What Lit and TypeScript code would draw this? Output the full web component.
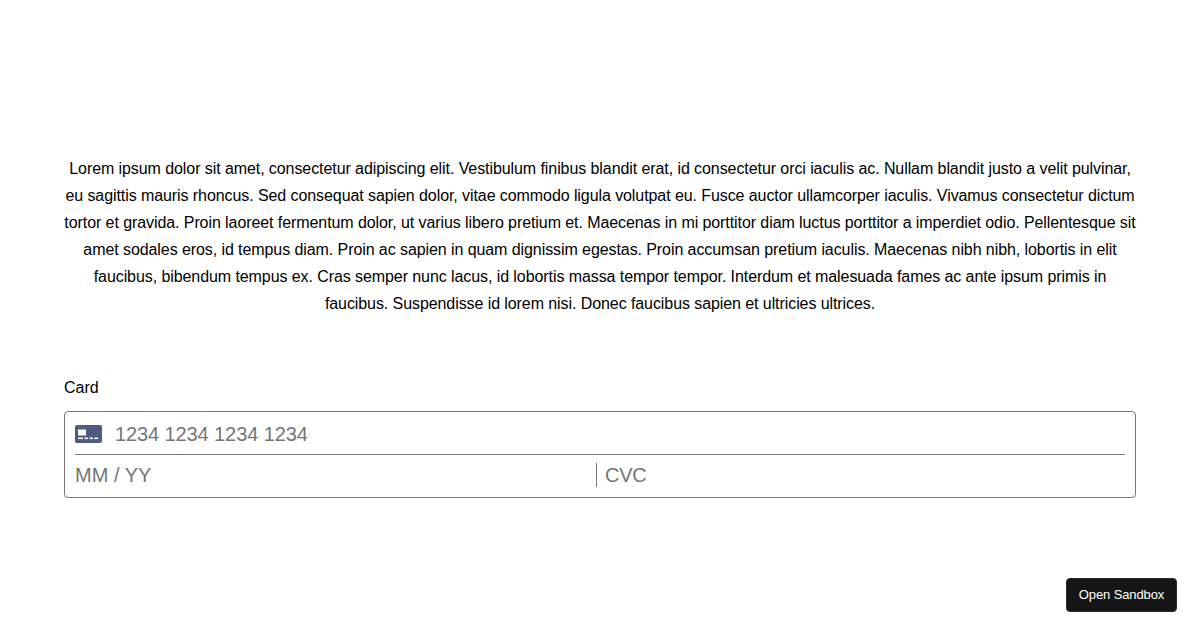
import { LitElement, html, css } from "lit";
import { customElement } from "lit/decorators.js";

const TEXT = "Lorem ipsum dolor sit amet, consectetur adipiscing elit. Vestibulum finibus blandit erat, id consectetur orci iaculis ac. Nullam blandit justo a velit pulvinar, eu sagittis mauris rhoncus. Sed consequat sapien dolor, vitae commodo ligula volutpat eu. Fusce auctor ullamcorper iaculis. Vivamus consectetur dictum tortor et gravida. Proin laoreet fermentum dolor, ut varius libero pretium et. Maecenas in mi porttitor diam luctus porttitor a imperdiet odio. Pellentesque sit amet sodales eros, id tempus diam. Proin ac sapien in quam dignissim egestas. Proin accumsan pretium iaculis. Maecenas nibh nibh, lobortis in elit faucibus, bibendum tempus ex. Cras semper nunc lacus, id lobortis massa tempor tempor. Interdum et malesuada fames ac ante ipsum primis in faucibus. Suspendisse id lorem nisi. Donec faucibus sapien et ultricies ultrices.";

@customElement("app-root")
export class AppRoot extends LitElement {
  static styles = css`
    :host {
      display: block;
      height: 630px;
      overflow: hidden;
      background: #fff;
      color: #000;
      font-family: "Liberation Sans", Arial, sans-serif;
      font-size: 16px;
    }
    .page {
      padding: 155px 64px 0;
      display: flex;
      flex-direction: column;
    }
    p {
      margin: 0 0 61px;
      line-height: 27px;
      text-align: center;
      letter-spacing: -0.08px;
    }
    label {
      display: block;
      line-height: 20px;
      margin-bottom: 13px;
    }
    .card {
      box-sizing: border-box;
      height: 87px;
      border: 1px solid #767676;
      border-radius: 4px;
      padding: 0 10px;
      display: flex;
      flex-direction: column;
      font-size: 20px;
      color: #757575;
    }
    .row1 {
      height: 43px;
      box-sizing: border-box;
      padding-top: 2px;
      display: flex;
      align-items: center;
      gap: 13px;
      border-bottom: 1px solid #767676;
      flex: none;
      letter-spacing: -0.1px;
    }
    .row2 {
      flex: 1;
      padding-bottom: 2px;
      display: grid;
      grid-template-columns: 521px 1fr;
      align-items: center;
    }
    .cvc {
      border-left: 1px solid #767676;
      padding-left: 8px;
      line-height: 24px;
      letter-spacing: -0.3px;
    }
    svg { display: block; flex: none; }
    .sandbox {
      position: absolute;
      left: 1066px;
      top: 578px;
      width: 111px;
      height: 34px;
      box-sizing: border-box;
      padding-bottom: 1px;
      display: flex;
      align-items: center;
      justify-content: center;
      background: #151515;
      border: 1px solid #2a2a2a;
      border-radius: 4px;
      color: #fff;
      font-size: 13px;
      letter-spacing: -0.12px;
      font-weight: 400;
    }
  `;

  render() {
    return html`
      <div class="page">
        <p>${TEXT}</p>
        <label>Card</label>
        <div class="card">
          <div class="row1">
            <svg width="27" height="18" viewBox="0 0 27 18">
              <rect width="27" height="18" rx="2" fill="#4f5b80"></rect>
              <rect x="3" y="4.5" width="8" height="6" fill="#fff"></rect>
              <rect x="3" y="12.5" width="5" height="1.6" fill="#fff"></rect>
              <rect x="9.5" y="12.5" width="3.5" height="1.6" fill="#fff"></rect>
              <rect x="14.5" y="12.5" width="3.5" height="1.6" fill="#fff"></rect>
              <rect x="19.5" y="12.5" width="3.5" height="1.6" fill="#fff"></rect>
            </svg>
            <span>1234 1234 1234 1234</span>
          </div>
          <div class="row2">
            <span>MM / YY</span>
            <span class="cvc">CVC</span>
          </div>
        </div>
      </div>
      <div class="sandbox">Open Sandbox</div>
    `;
  }
}
